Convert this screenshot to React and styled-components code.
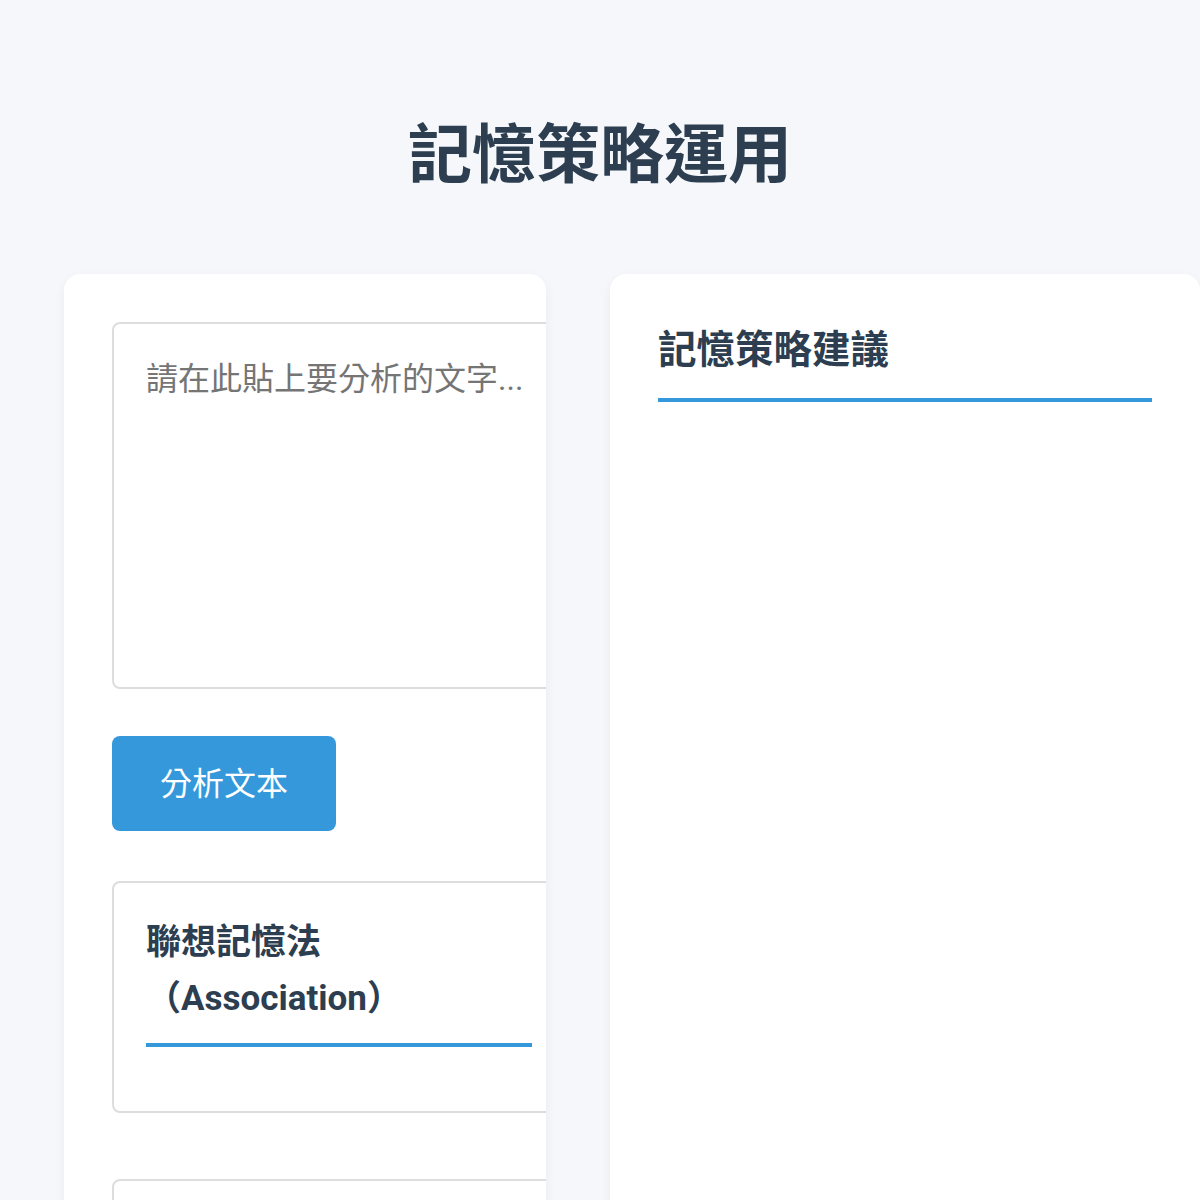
import React from "react";
import styled, { createGlobalStyle } from "styled-components";

const GlobalStyle = createGlobalStyle`
  html, body {
    margin: 0;
    padding: 0;
    overflow: hidden;
    background: #f5f7fa;
    font-family: Roboto, "Noto Sans CJK TC", sans-serif;
    color: #2c3e50;
  }
  * {
    box-sizing: border-box;
  }
`;

const Page = styled.div`
  min-height: 100vh;
  padding: 110px 0 0 64px;
`;

const Title = styled.h1`
  margin: 0 0 72px;
  padding-right: 64px;
  text-align: center;
  font-size: 64px;
  line-height: 92px;
  font-weight: 700;
  color: #2c3e50;
`;

const Columns = styled.div`
  display: grid;
  grid-template-columns: 482px 590px;
  gap: 64px;
  align-items: start;
`;

const Card = styled.section`
  background: #fff;
  border-radius: 16px;
  padding: 48px;
  min-height: 1000px;
  overflow: hidden;
  box-shadow: 0 4px 12px rgba(0, 0, 0, 0.05);
`;

const TextInput = styled.textarea`
  display: block;
  width: 454px;
  height: 367px;
  margin: 0 0 47px;
  padding: 32px;
  border: 2px solid #ddd;
  border-radius: 8px;
  font-family: Roboto, "Noto Sans CJK TC", sans-serif;
  font-size: 32px;
  line-height: 46px;
  color: #2c3e50;
  resize: none;
  outline: none;

  &::placeholder {
    color: #757575;
  }
`;

const AnalyzeButton = styled.button`
  display: block;
  margin: 0 0 50px;
  padding: 25px 48px 23px;
  border: none;
  border-radius: 8px;
  background: #3498db;
  color: #fff;
  font-family: Roboto, "Noto Sans CJK TC", sans-serif;
  font-size: 32px;
  line-height: 47px;
  cursor: pointer;
`;

const StrategyCard = styled.div`
  width: 454px;
  margin-bottom: 66px;
  padding: 32px;
  border: 2px solid #ddd;
  border-radius: 8px;
  background: #fff;
`;

const StrategyTitle = styled.h3`
  margin: 0 0 32px;
  padding-bottom: 16px;
  border-bottom: 4px solid #3498db;
  font-size: 35px;
  line-height: 56px;
  font-weight: 700;
  color: #2c3e50;
`;

const StrategyText = styled.p`
  margin: 0;
  font-size: 30px;
  line-height: 48px;
  color: #555;
`;

const SectionTitle = styled.h2`
  margin: 0;
  padding-bottom: 20px;
  border-bottom: 4px solid #3498db;
  font-size: 38.5px;
  line-height: 56px;
  font-weight: 700;
  color: #2c3e50;
`;

const strategies = [
  { name: "聯想記憶法（Association）", text: "" },
  { name: "位置記憶法（Method of Loci）", text: "" },
];

const App = () => {
  return (
    <Page>
      <GlobalStyle />
      <Title>記憶策略運用</Title>
      <Columns>
        {/* input side */}
        <Card>
          <TextInput placeholder="請在此貼上要分析的文字..." />
          <AnalyzeButton>分析文本</AnalyzeButton>
          {strategies.map((s) => (
            <StrategyCard key={s.name}>
              <StrategyTitle>{s.name}</StrategyTitle>
              {s.text && <StrategyText>{s.text}</StrategyText>}
            </StrategyCard>
          ))}
        </Card>

        {/* suggestions side */}
        <Card>
          <SectionTitle>記憶策略建議</SectionTitle>
        </Card>
      </Columns>
    </Page>
  );
};

export default App;
